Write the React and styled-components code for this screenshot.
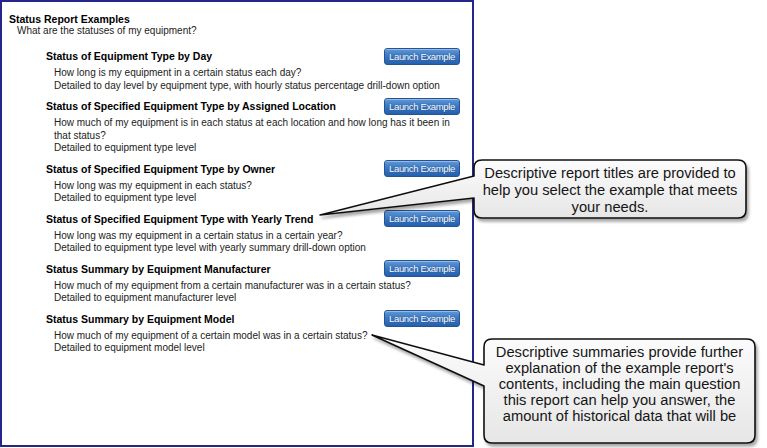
import React from "react";
import styled, { createGlobalStyle } from "styled-components";

const Global = createGlobalStyle`
  html, body { margin: 0; padding: 0; background: #ffffff; }
  body { font-family: "Liberation Sans", Arial, sans-serif; }
`;

const Page = styled.div`
  position: relative;
  width: 767px;
  height: 448px;
  overflow: hidden;
  background: #ffffff;
`;

const Panel = styled.section`
  box-sizing: border-box;
  width: 474px;
  height: 447px;
  border: 2px solid #25258a;
  padding: 11px 12px 0 7px;
  color: #111;
  font-family: "Liberation Sans", Arial, sans-serif;
`;

const Heading = styled.div`
  font-weight: bold;
  font-size: 10.5px;
  line-height: 12px;
  color: #000;
  white-space: nowrap;
`;

const SubHeading = styled.div`
  padding-left: 8px;
  font-size: 10px;
  line-height: 12px;
  color: #222;
  white-space: nowrap;
`;

const List = styled.div`
  margin: 10px 0 0 37px;
  display: flex;
  flex-direction: column;
  gap: 5px;
`;

const Item = styled.div`
  display: flex;
  flex-direction: column;
`;

const Row = styled.div`
  height: 18px;
  display: flex;
  align-items: center;
  justify-content: space-between;
`;

const Title = styled.div`
  font-weight: bold;
  font-size: 10.5px;
  color: #000;
  white-space: nowrap;
`;

const LaunchButton = styled.button`
  box-sizing: border-box;
  width: 76px;
  height: 17px;
  padding: 0;
  border: 1px solid #245494;
  border-radius: 3px;
  background: linear-gradient(#5f98d8 0%, #3d79c2 45%, #2460ac 100%);
  box-shadow: inset 0 1px 0 rgba(255, 255, 255, 0.35);
  color: #ffffff;
  font-family: "Liberation Sans", Arial, sans-serif;
  font-size: 9.5px;
  letter-spacing: -0.35px;
  line-height: 15px;
  text-shadow: 0 0 1px rgba(0, 30, 80, 0.6);
  cursor: pointer;
`;

const Desc = styled.div`
  margin-top: 2px;
  padding-left: 8px;
  font-size: 10px;
  line-height: 12.5px;
  color: #222;
`;

const Line = styled.div`
  white-space: nowrap;
`;

const Overlay = styled.svg`
  position: absolute;
  left: 0;
  top: 0;
  pointer-events: none;
`;

const CalloutText = styled.div`
  position: absolute;
  left: ${(p) => p.$left}px;
  top: ${(p) => p.$top}px;
  width: ${(p) => p.$width}px;
  height: ${(p) => p.$height}px;
  overflow: hidden;
  text-align: center;
  font-family: "Liberation Sans", Arial, sans-serif;
  font-size: 14.7px;
  line-height: ${(p) => p.$lh}px;
  color: #151515;
`;

const reports = [
  {
    title: "Status of Equipment Type by Day",
    lines: [
      "How long is my equipment in a certain status each day?",
      "Detailed to day level by equipment type, with hourly status percentage drill-down option",
    ],
  },
  {
    title: "Status of Specified Equipment Type by Assigned Location",
    lines: [
      "How much of my equipment is in each status at each location and how long has it been in",
      "that status?",
      "Detailed to equipment type level",
    ],
  },
  {
    title: "Status of Specified Equipment Type by Owner",
    lines: ["How long was my equipment in each status?", "Detailed to equipment type level"],
  },
  {
    title: "Status of Specified Equipment Type with Yearly Trend",
    lines: [
      "How long was my equipment in a certain status in a certain year?",
      "Detailed to equipment type level with yearly summary drill-down option",
    ],
  },
  {
    title: "Status Summary by Equipment Manufacturer",
    lines: [
      "How much of my equipment from a certain manufacturer was in a certain status?",
      "Detailed to equipment manufacturer level",
    ],
  },
  {
    title: "Status Summary by Equipment Model",
    lines: [
      "How much of my equipment of a certain model was in a certain status?",
      "Detailed to equipment model level",
    ],
  },
];

const callout1 =
  "M482 160 H738 Q746 160 746 168 V210 Q746 218 738 218 H482 Q474 218 474 210 V198 L320 215 L474 176 V168 Q474 160 482 160 Z";
const callout2 =
  "M492 339 H747 Q755 339 755 347 V435 Q755 443 747 443 H492 Q484 443 484 435 V386 L372 335 L484 365 V347 Q484 339 492 339 Z";

export default function App() {
  return (
    <Page>
      <Global />
      <Panel>
        <Heading>Status Report Examples</Heading>
        <SubHeading>What are the statuses of my equipment?</SubHeading>
        <List>
          {reports.map((r) => (
            <Item key={r.title}>
              <Row>
                <Title>{r.title}</Title>
                <LaunchButton>Launch Example</LaunchButton>
              </Row>
              <Desc>
                {r.lines.map((l) => (
                  <Line key={l}>{l}</Line>
                ))}
              </Desc>
            </Item>
          ))}
        </List>
      </Panel>

      <Overlay width="767" height="448" viewBox="0 0 767 448">
        <defs>
          <linearGradient id="cg" x1="0" y1="0" x2="0" y2="1">
            <stop offset="0" stopColor="#fcfcfc" />
            <stop offset="1" stopColor="#e6e6e6" />
          </linearGradient>
          <filter id="sh" x="-10%" y="-10%" width="130%" height="140%">
            <feDropShadow dx="2" dy="3" stdDeviation="1.6" floodColor="#000" floodOpacity="0.35" />
          </filter>
        </defs>
        <path d={callout1} fill="url(#cg)" stroke="#111" strokeWidth="1.6" strokeLinejoin="round" filter="url(#sh)" />
        <path d={callout2} fill="url(#cg)" stroke="#111" strokeWidth="1.6" strokeLinejoin="round" filter="url(#sh)" />
      </Overlay>

      <CalloutText $left={476} $top={165} $width={268} $height={52} $lh={17}>
        Descriptive report titles are provided to help you select the example that meets your needs.
      </CalloutText>
      <CalloutText $left={486} $top={344} $width={267} $height={80} $lh={16}>
        Descriptive summaries provide further explanation of the example report's contents, including the main
        question this report can help you answer, the amount of historical data that will be
      </CalloutText>
    </Page>
  );
}
